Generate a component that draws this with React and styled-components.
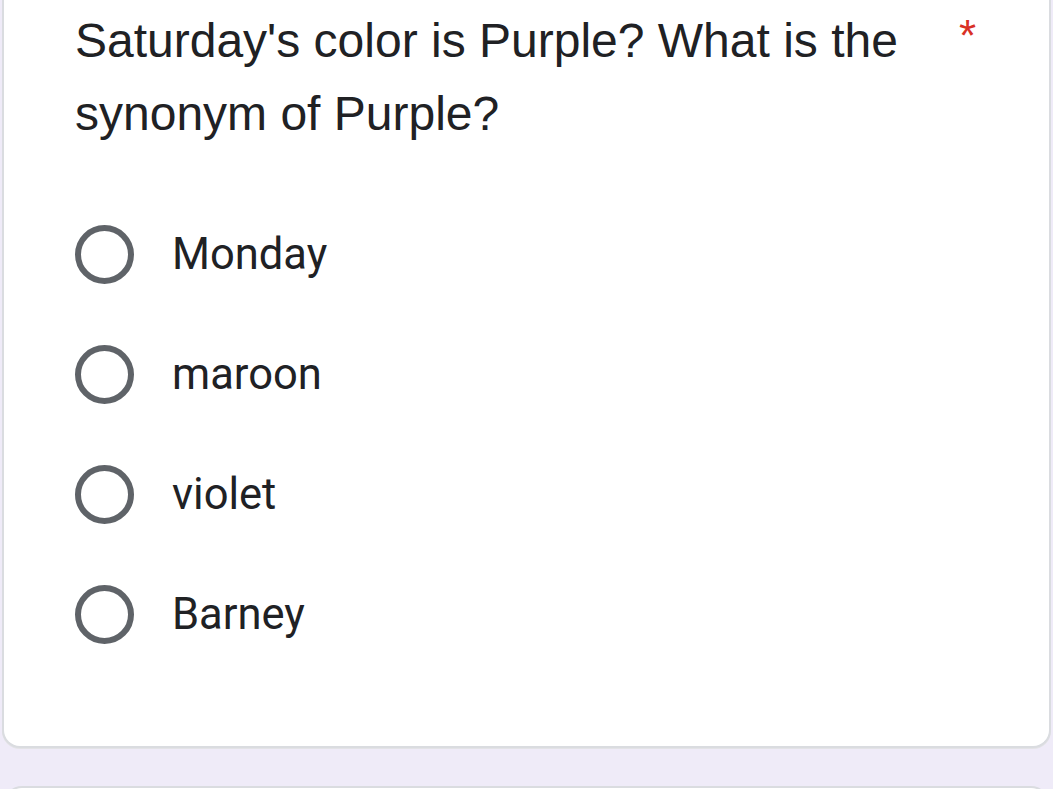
import React from "react";
import styled, { createGlobalStyle } from "styled-components";

const Global = createGlobalStyle`
  html, body { margin: 0; padding: 0; background: #efebf8; overflow: hidden; }
  body { width: 1053px; height: 789px; }
`;

const Page = styled.div`
  display: flex;
  flex-direction: column;
  gap: 38px;
  padding: 0 2px 0 2px;
`;

const Card = styled.div`
  background: #fff;
  border: 2px solid #dadce0;
  border-top: none;
  border-radius: 0 0 18px 18px;
  padding: 4px 0 72px 71px;
  box-shadow: 0 1px 0 #e3e3e6;
`;

const NextCard = styled.div`
  margin: 0 2px;
  height: 40px;
  background: #fff;
  border: 2px solid #dadce0;
  border-bottom: none;
  border-radius: 18px 18px 0 0;
`;

const QuestionRow = styled.div`
  display: flex;
  align-items: flex-start;
  padding-right: 73px;
`;

const Question = styled.div`
  font-family: "Liberation Sans", Arial, sans-serif;
  font-size: 48px;
  line-height: 73px;
  color: #202124;
  width: 850px;
`;

const Required = styled.span`
  font-family: "Liberation Sans", Arial, sans-serif;
  font-size: 44px;
  line-height: 64px;
  color: #d93025;
  margin-left: auto;
`;

const Options = styled.div`
  display: flex;
  flex-direction: column;
  margin-top: 44px;
`;

const Option = styled.label`
  display: flex;
  align-items: center;
  height: 120px;
  gap: 38px;
`;

const Radio = styled.span`
  width: 59px;
  height: 59px;
  box-sizing: border-box;
  border: 6px solid #5f6368;
  border-radius: 50%;
  flex-shrink: 0;
`;

const OptionText = styled.span`
  font-family: Roboto, "Noto Sans", sans-serif;
  font-size: 43.5px;
  color: #202124;
`;

const options = ["Monday", "maroon", "violet", "Barney"];

export default function App() {
  return (
    <>
      <Global />
      <Page>
        <Card>
          <QuestionRow>
            <Question>Saturday's color is Purple? What is the synonym of Purple?</Question>
            <Required>*</Required>
          </QuestionRow>
          <Options>
            {options.map((o) => (
              <Option key={o}>
                <Radio />
                <OptionText>{o}</OptionText>
              </Option>
            ))}
          </Options>
        </Card>
        <NextCard />
      </Page>
    </>
  );
}
